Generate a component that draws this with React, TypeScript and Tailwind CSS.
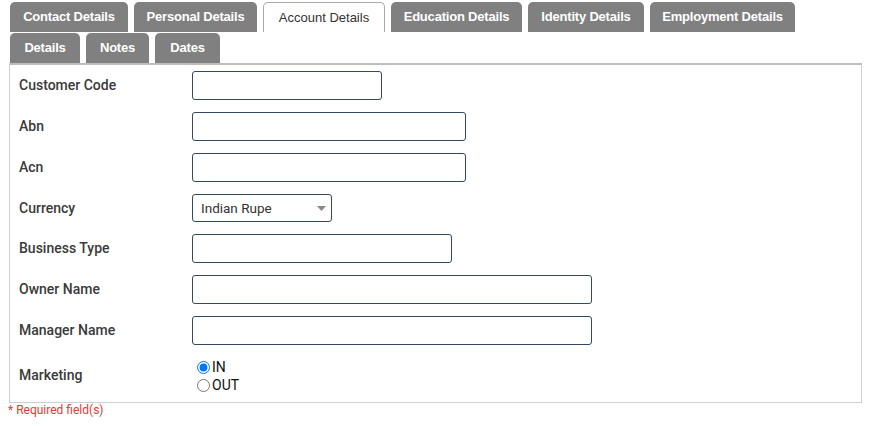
import React, { useState } from "react";

const rowOne = [
  { label: "Contact Details", w: "w-[118px]" },
  { label: "Personal Details", w: "w-[123px]" },
  { label: "Account Details", w: "w-[122px]" },
  { label: "Education Details", w: "w-[131px]" },
  { label: "Identity Details", w: "w-[116px]" },
  { label: "Employment Details", w: "w-[145px]" },
];
const rowTwo = [
  { label: "Details", w: "w-[70px]" },
  { label: "Notes", w: "w-[63px]" },
  { label: "Dates", w: "w-[65px]" },
];

function Tab({ label, w, active, onClick }: { label: string; w: string; active: boolean; onClick: () => void }) {
  if (active) {
    return (
      <button
        onClick={onClick}
        className={`${w} shrink-0 h-[30px] rounded-t-[5px] border border-b-0 border-[#a9a9a9] bg-white text-[13px] text-[#333] font-['Liberation_Sans',Arial,sans-serif]`}
      >
        {label}
      </button>
    );
  }
  return (
    <button
      onClick={onClick}
      className={`${w} shrink-0 h-[30px] rounded-t-[5px] bg-[#808080] text-[13px] font-bold tracking-[-0.2px] text-white font-['Liberation_Sans',Arial,sans-serif]`}
    >
      {label}
    </button>
  );
}

function Field({ label, width }: { label: string; width: string }) {
  return (
    <div className="flex items-center">
      <label className="w-[173px] shrink-0 text-[14px] font-medium text-[#3a3a3a]">{label}</label>
      <input
        type="text"
        className={`${width} h-[29px] rounded-[3px] border border-[#34495e] px-2 text-[14px] outline-none`}
      />
    </div>
  );
}

export default function App() {
  const [tab, setTab] = useState("Account Details");
  const [marketing, setMarketing] = useState("IN");

  return (
    <div className="w-[870px] h-[426px] bg-white pl-[9px] pt-[2px] font-['Roboto','Liberation_Sans',sans-serif]">
      <div className="flex flex-col gap-px pl-px">
        <div className="flex gap-[6px]">
          {rowOne.map((t) => (
            <Tab key={t.label} label={t.label} w={t.w} active={tab === t.label} onClick={() => setTab(t.label)} />
          ))}
        </div>
        <div className="flex gap-[6px]">
          {rowTwo.map((t) => (
            <Tab key={t.label} label={t.label} w={t.w} active={tab === t.label} onClick={() => setTab(t.label)} />
          ))}
        </div>
      </div>

      <div className="w-[853px] border border-[#cfcfcf] border-t-2 border-t-[#bdbdbd] pl-[9px] pt-[6px] pb-[8px] flex flex-col gap-[12px]">
        <Field label="Customer Code" width="w-[190px]" />
        <Field label="Abn" width="w-[274px]" />
        <Field label="Acn" width="w-[274px]" />
        <div className="flex items-center">
          <label className="w-[173px] shrink-0 text-[14px] font-medium text-[#3a3a3a]">Currency</label>
          <div className="relative w-[140px] h-[28px] rounded-[3px] border border-[#34495e] flex items-center pl-[8px] text-[13.5px] text-[#333]">
            Indian Rupe
            <svg className="absolute right-[5px] top-[11px]" width="9" height="5" viewBox="0 0 9 5">
              <path d="M0 0 L9 0 L4.5 5 Z" fill="#888" />
            </svg>
          </div>
        </div>
        <Field label="Business Type" width="w-[260px]" />
        <Field label="Owner Name" width="w-[400px]" />
        <Field label="Manager Name" width="w-[400px]" />
        <div className="flex items-center">
          <label className="w-[173px] shrink-0 text-[14px] font-medium text-[#3a3a3a]">Marketing</label>
          <div className="flex flex-col pt-px text-[14px] font-normal text-[#111]">
            {["IN", "OUT"].map((v) => (
              <label key={v} className="flex items-center h-[18px]">
                <input
                  type="radio"
                  name="marketing"
                  checked={marketing === v}
                  onChange={() => setMarketing(v)}
                  className="w-[13px] h-[13px] ml-[5px] mr-[2px]"
                />
                {v}
              </label>
            ))}
          </div>
        </div>
      </div>
      <div className="-ml-px pt-px leading-[12px] text-[12px] text-[#e53935]">* Required field(s)</div>
    </div>
  );
}
